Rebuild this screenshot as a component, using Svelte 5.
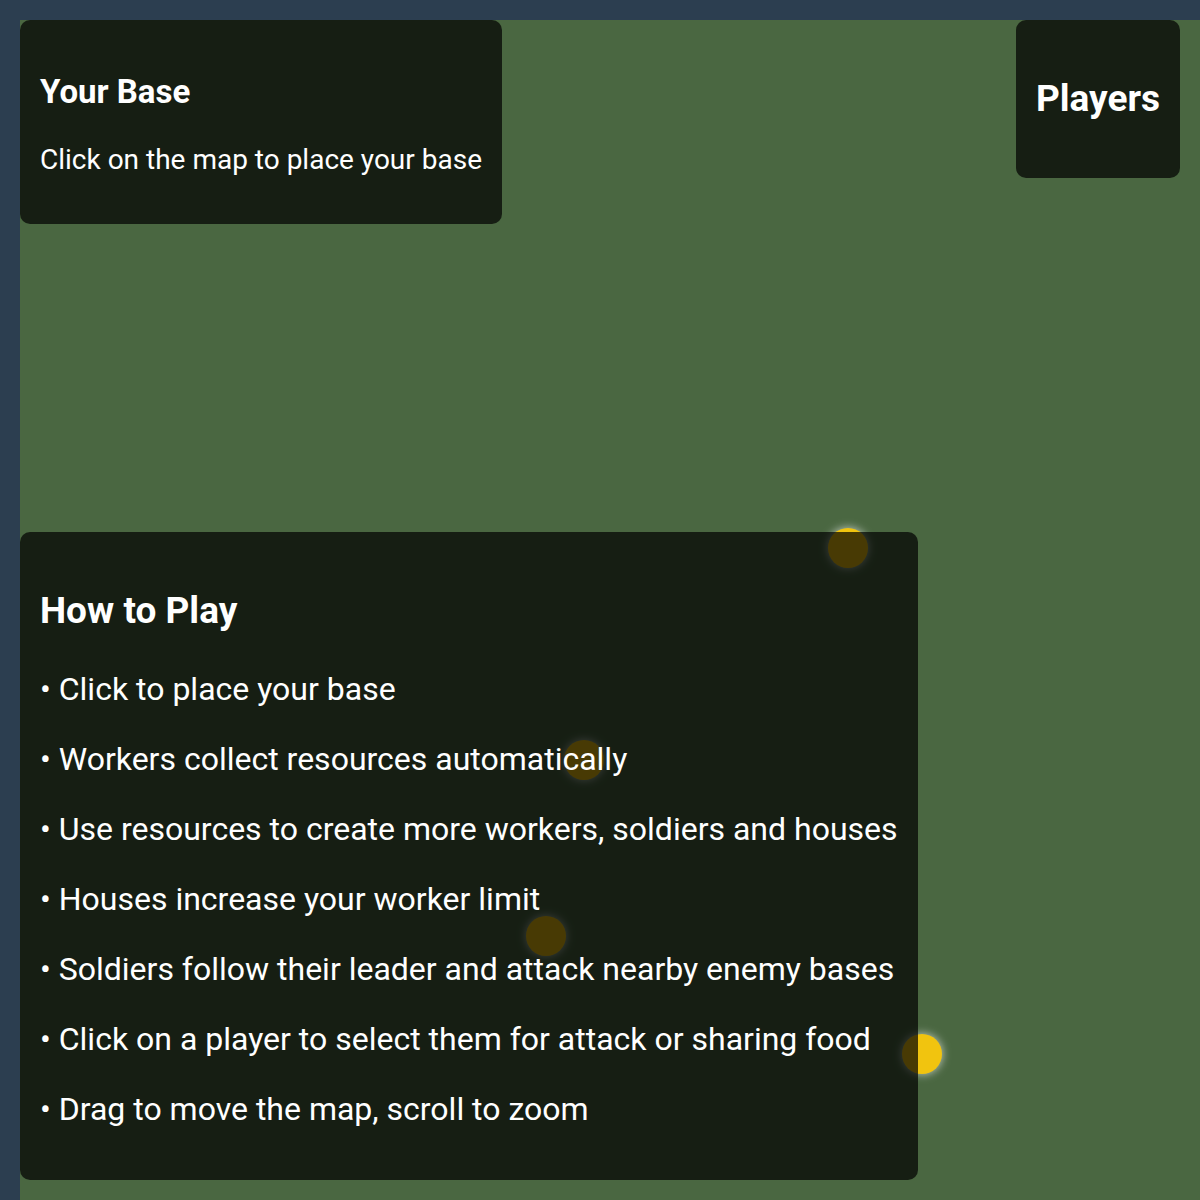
<script lang="ts">
  type Resource = { x: number; y: number };

  const resources: Resource[] = [
    { x: 848, y: 548 },
    { x: 584, y: 760 },
    { x: 546, y: 936 },
    { x: 922, y: 1054 },
  ];

  const instructions = [
    'Click to place your base',
    'Workers collect resources automatically',
    'Use resources to create more workers, soldiers and houses',
    'Houses increase your worker limit',
    'Soldiers follow their leader and attack nearby enemy bases',
    'Click on a player to select them for attack or sharing food',
    'Drag to move the map, scroll to zoom',
  ];
</script>

<main class="game">
  <div class="map">
    {#each resources as resource}
      <div class="resource" style="left: {resource.x}px; top: {resource.y}px"></div>
    {/each}
  </div>

  <div class="hud">
    <div class="top">
      <section class="panel base">
        <h3>Your Base</h3>
        <p>Click on the map to place your base</p>
      </section>
      <section class="panel players">
        <h3>Players</h3>
      </section>
    </div>

    <section class="panel instructions">
      <h3>How to Play</h3>
      {#each instructions as line}
        <p>• {line}</p>
      {/each}
    </section>
  </div>
</main>

<style>
  :global(body) {
    margin: 0;
    background: #2c3e50;
  }

  .game {
    position: relative;
    box-sizing: border-box;
    min-height: 100vh;
    padding: 20px 0 0 20px;
    overflow: hidden;
    display: flex;
    color: #fff;
    font-family: Roboto, sans-serif;
  }

  .map {
    position: absolute;
    inset: 0;
    border-top: 20px solid #2c3e50;
    border-left: 20px solid #2c3e50;
    background: #4a6741;
  }

  .resource {
    position: absolute;
    width: 40px;
    height: 40px;
    margin: -40px 0 0 -40px;
    border-radius: 50%;
    background: #f1c40f;
    box-shadow: 0 0 10px rgba(255, 255, 255, 0.7);
  }

  .hud {
    position: relative;
    flex: 1;
    display: flex;
    flex-direction: column;
    justify-content: space-between;
    align-items: flex-start;
    padding-bottom: 20px;
  }

  .top {
    align-self: stretch;
    display: flex;
    justify-content: space-between;
    align-items: flex-start;
    padding-right: 20px;
  }

  .panel {
    padding: 20px;
    border-radius: 10px;
    background: rgba(0, 0, 0, 0.7);
  }

  h3 {
    margin: 37px 0;
    font-size: 37px;
    font-weight: 700;
    line-height: 44px;
  }

  p {
    margin: 32px 0;
    font-size: 32px;
    line-height: 38px;
  }

  .base h3 {
    margin: 33px 0;
    font-size: 33px;
    line-height: 38px;
  }

  .base p {
    margin: 28px 0;
    font-size: 28px;
    line-height: 32px;
  }
</style>
